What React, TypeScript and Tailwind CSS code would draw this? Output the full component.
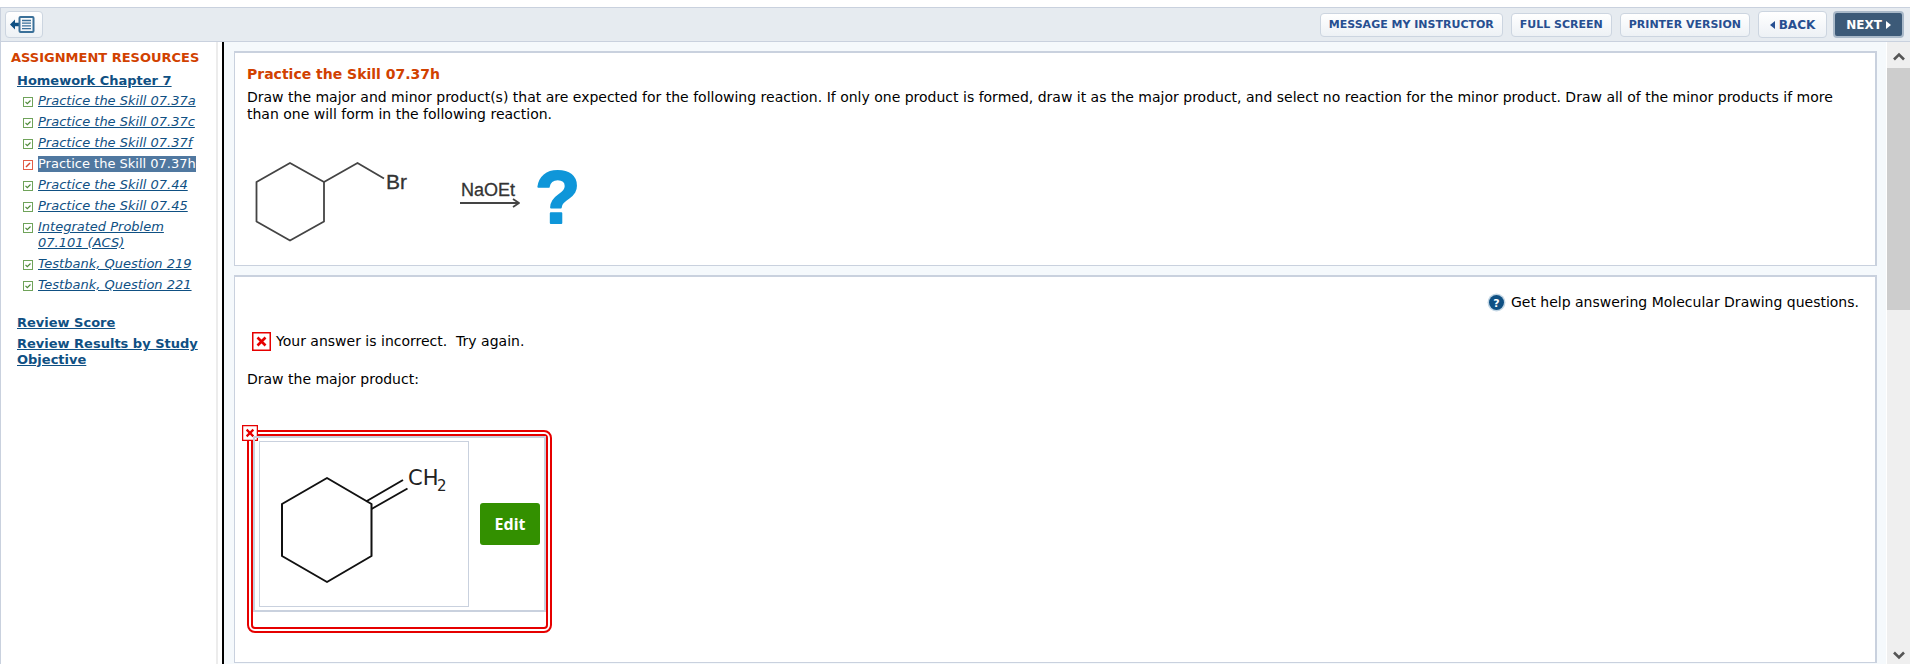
import { ReactNode } from "react";

interface ResourceLink {
    title: string;
    status: "correct" | "incorrect";
    isActive?: boolean;
}

const resources: ResourceLink[] = [
    { title: "Practice the Skill 07.37a", status: "correct" },
    { title: "Practice the Skill 07.37c", status: "correct" },
    { title: "Practice the Skill 07.37f", status: "correct" },
    { title: "Practice the Skill 07.37h", status: "incorrect", isActive: true },
    { title: "Practice the Skill 07.44", status: "correct" },
    { title: "Practice the Skill 07.45", status: "correct" },
    { title: "Integrated Problem 07.101 (ACS)", status: "correct" },
    { title: "Testbank, Question 219", status: "correct" },
    { title: "Testbank, Question 221", status: "correct" },
];

const toolbarActions = ["MESSAGE MY INSTRUCTOR", "FULL SCREEN", "PRINTER VERSION"];

const StatusIcon = ({ status }: { status: ResourceLink["status"] }) => (
    <svg width="10" height="10" viewBox="0 0 10 10" fill="none" className="mt-1 shrink-0">
        {status === "correct" ? (
            <>
                <rect x="0.5" y="0.5" width="9" height="9" stroke="#6fa35a" />
                <path d="M2.500 4.800l1.800 1.800L7.500 3.500" stroke="#4f8a38" strokeWidth="1.2" />
            </>
        ) : (
            <>
                <rect x="0.5" y="0.5" width="9" height="9" stroke="#e2604a" />
                <path d="M3 7l4-4" stroke="#d8452c" strokeWidth="1.5" />
            </>
        )}
    </svg>
);

const CrossIcon = ({ size }: { size: number }) => (
    <svg width={size} height={size} viewBox="0 0 19 19" className="block shrink-0">
        <rect x="0.75" y="0.75" width="17.5" height="17.5" fill="#fff" stroke="#e60000" strokeWidth="1.5" />
        <path d="M5.500 5.500l8 8M13.500 5.500l-8 8" stroke="#e60000" strokeWidth="2.6" />
    </svg>
);

const Card = ({ children, className }: { children: ReactNode; className: string }) => (
    <section className={`border border-t-2 border-r-2 border-[#c9d1de] bg-white px-3 ${className}`}>
        {children}
    </section>
);

const Toolbar = () => (
    <header className="mt-[7px] flex h-[35px] shrink-0 items-center justify-between border border-r-0 border-[#c9d1de] bg-[#e6ebf0] pr-[6px] pl-1">
        <button
            aria-label="Hide assignment resources"
            className="flex h-[27px] w-[38px] items-center justify-center rounded border border-[#ccd5e0] bg-linear-to-b from-white to-[#edf1f5] pr-1"
        >
            <svg width="25" height="17" viewBox="0 0 25 17" fill="none">
                <path d="M0 8.500L5 3.500v3.200h4v3.600H5v3.200z" fill="#0f5083" />
                <rect x="9.500" y="1" width="14" height="15" rx="1" stroke="#3a7099" strokeWidth="2" />
                <path d="M12 4.500h9M12 7.200h9M12 9.900h9M12 12.600h9" stroke="#3a7099" strokeWidth="1.3" />
            </svg>
        </button>
        <nav className="flex items-center gap-2 text-[11px] font-bold text-[#274f91]">
            {toolbarActions.map((label) => (
                <button
                    key={label}
                    className="h-6 rounded border border-[#ccd5e0] bg-linear-to-b from-white to-[#edf1f5] px-2"
                >
                    {label}
                </button>
            ))}
            <div className="flex gap-[6px] text-xs">
                <button className="flex h-[27px] w-[69px] items-center justify-center gap-1 rounded border border-[#ccd5e0] bg-linear-to-b from-white to-[#edf1f5]">
                    <svg width="5" height="8" viewBox="0 0 5 8" fill="currentColor">
                        <path d="M5 0v8L0 4z" />
                    </svg>
                    BACK
                </button>
                <button className="flex h-[27px] w-[71px] items-center justify-center gap-1 rounded border-2 border-[#a9b9c9] bg-[#3c5a78] text-white">
                    NEXT
                    <svg width="5" height="8" viewBox="0 0 5 8" fill="currentColor">
                        <path d="M0 0v8l5-4z" />
                    </svg>
                </button>
            </div>
        </nav>
    </header>
);

const Sidebar = () => (
    <aside className="w-[224px] shrink-0 border-r-2 border-l border-r-black border-l-[#c9d1de] bg-white pr-1">
        <div className="h-full border-r-2 border-[#ececec] pt-2 pr-3 pl-4 text-[13px] leading-4 text-[#0f5083]">
            <h2 className="-ml-[6px] font-bold whitespace-nowrap text-[#d14100]">ASSIGNMENT RESOURCES</h2>
            <a href="#homework" className="mt-[7px] block font-bold underline">Homework Chapter 7</a>
            <ul className="mt-1 mb-[22px] flex flex-col gap-[5px] pl-[6px]">
                {resources.map(({ title, status, isActive }) => (
                    <li key={title} className="flex gap-[5px]">
                        <StatusIcon status={status} />
                        {isActive ? (
                            <a href="#question" className="bg-[#5078a0] whitespace-nowrap text-white">{title}</a>
                        ) : (
                            <a href="#question" className="italic underline">{title}</a>
                        )}
                    </li>
                ))}
            </ul>
            <a href="#score" className="block font-bold underline">Review Score</a>
            <a href="#results" className="mt-[5px] block font-bold underline">Review Results by Study Objective</a>
        </div>
    </aside>
);

const Reaction = () => (
    <svg
        width="330"
        height="90"
        viewBox="250 155 330 90"
        fill="none"
        stroke="#444"
        strokeWidth="1.8"
        strokeLinejoin="round"
        className="block"
    >
        <path d="M256.5 182L290 163l34 19v39.5L290 240.5l-33.5-19z" />
        <path d="M324 182l33.5-19L384 178.5" />
        <path d="M460 203h58M513 199l6 4-6 4" />
        <g fontFamily="Liberation Sans, sans-serif">
            <text x="386" y="189" fontSize="21" fill="#333" stroke="#333" strokeWidth="0.3">Br</text>
            <text x="461" y="196" fontSize="18" fill="#333" stroke="#333" strokeWidth="0.3">NaOEt</text>
            <text x="535" y="223" fontSize="74" fontWeight="bold" fill="#0f96d9" stroke="#0f96d9" strokeWidth="2">?</text>
        </g>
    </svg>
);

const AnswerDrawing = () => (
    <svg
        width="208"
        height="164"
        viewBox="260 442 208 164"
        fill="none"
        stroke="#111"
        strokeWidth="2"
        strokeLinejoin="round"
        className="block"
    >
        <path d="M282 504l45-26 44.5 26v52L327 582l-45-26z" />
        <path d="M366 501.5L403 480M371.5 509l36-20.5" />
        <g stroke="none" fill="#222" fontFamily="DejaVu Sans, sans-serif">
            <text x="408" y="485" fontSize="21">CH</text>
            <text x="437" y="491" fontSize="15">2</text>
        </g>
    </svg>
);

const Question = () => (
    <Card className="h-[215px] pt-[13px]">
        <h1 className="font-bold text-[#d14100]">Practice the Skill 07.37h</h1>
        <p className="mt-[6px]">
            Draw the major and minor product(s) that are expected for the following reaction. If only one product is
            formed, draw it as the major product, and select no reaction for the minor product. Draw all of the minor
            products if more than one will form in the following reaction.
        </p>
        <div className="mt-8 pl-[3px]">
            <Reaction />
        </div>
    </Card>
);

const Answer = () => (
    <Card className="mt-[9px] h-[388px] pt-4">
        <a href="#help" className="flex items-center justify-end gap-[5px] pr-1">
            <svg width="19" height="19" viewBox="0 0 19 19">
                <circle cx="9.5" cy="9.5" r="9" fill="#c3d6e4" />
                <circle cx="9.5" cy="9.5" r="7.5" fill="#0f5083" />
                <text x="9.5" y="14" fontSize="11" fontWeight="bold" textAnchor="middle" fill="#fff">?</text>
            </svg>
            Get help answering Molecular Drawing questions.
        </a>
        <p className="mt-5 flex items-center gap-[5px] pl-[5px] whitespace-pre">
            <CrossIcon size={19} />
            {"Your answer is incorrect.  Try again."}
        </p>
        <p className="mt-5">Draw the major product:</p>
        <div className="relative mt-[42px] h-[203px] w-[305px] rounded-lg border-6 border-double border-[#e60000]">
            <div className="absolute -top-[11px] -left-[11px]">
                <CrossIcon size={16} />
            </div>
            <div className="relative flex h-[176px] items-center justify-between border-2 border-[#c9d1de] px-1">
                <div className="border border-[#c9d1de]">
                    <AnswerDrawing />
                </div>
                <button className="h-[42px] w-[60px] rounded-[3px] bg-[#339000] font-['Noto_Sans',sans-serif] text-base font-bold text-white">
                    Edit
                </button>
            </div>
        </div>
    </Card>
);

const Scrollbar = () => (
    <div className="flex w-6 shrink-0 flex-col items-center border-l border-white bg-[#efefef] text-[#555]">
        <svg width="12" height="9" viewBox="0 0 12 9" fill="none" stroke="currentColor" strokeWidth="2.6" className="mt-[10px] mb-[7px] shrink-0">
            <path d="M1 7.5l5-5 5 5" />
        </svg>
        <div className="h-[242px] w-full bg-[#cdcdcd]" />
        <svg width="12" height="9" viewBox="0 0 12 9" fill="none" stroke="currentColor" strokeWidth="2.6" className="mt-auto mb-1 shrink-0">
            <path d="M1 1.5l5 5 5-5" />
        </svg>
    </div>
);

export default function App() {
    return (
        <div className="flex h-screen flex-col overflow-hidden bg-white font-['Verdana','DejaVu_Sans',sans-serif] text-sm leading-[17px] text-black">
            <Toolbar />
            <div className="flex min-h-0 flex-1">
                <Sidebar />
                <main className="min-w-0 flex-1 overflow-hidden bg-[#f5f9fc] pt-[9px] pr-[9px] pl-[10px]">
                    <Question />
                    <Answer />
                </main>
                <Scrollbar />
            </div>
        </div>
    );
}
